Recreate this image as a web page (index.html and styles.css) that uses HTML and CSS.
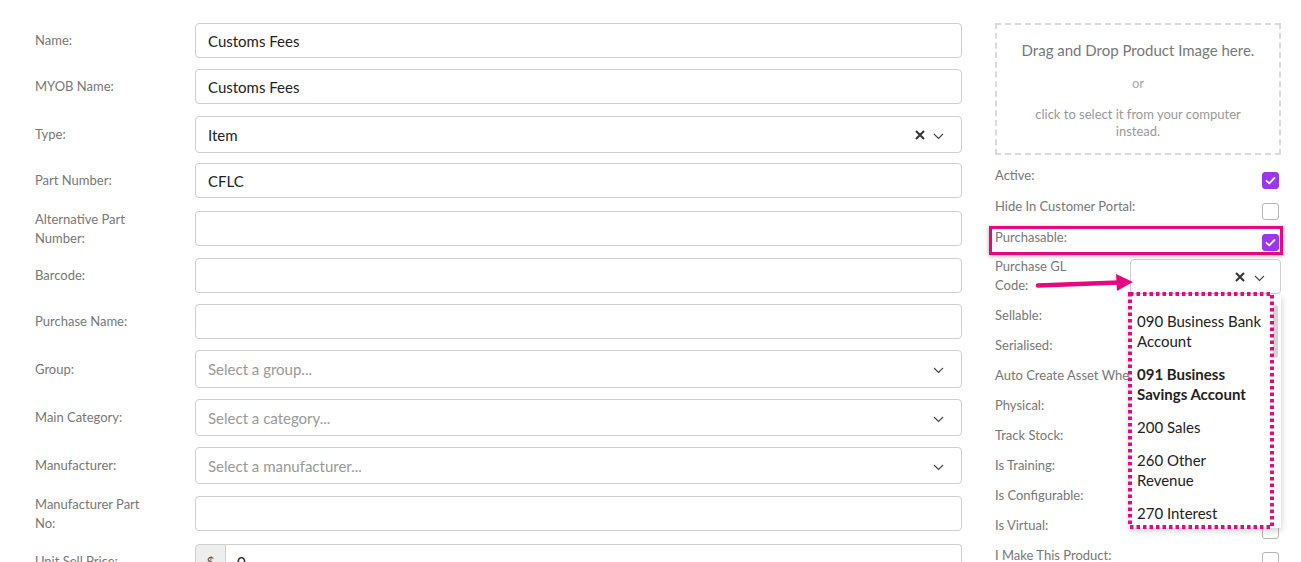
FILE: index.html
```html
<!DOCTYPE html>
<html>
<head>
<meta charset="utf-8">
<link rel="stylesheet" href="styles.css">
</head>
<body>
<div class="page">
  <div class="form">
    <div class="row h35"><div class="lbl">Name:</div><div class="ctl"><span class="val">Customs Fees</span></div></div>
    <div class="row h35"><div class="lbl">MYOB Name:</div><div class="ctl"><span class="val">Customs Fees</span></div></div>
    <div class="row h37"><div class="lbl">Type:</div><div class="ctl sel"><span class="val">Item</span><span class="icons"><svg class="x" width="10" height="10" viewBox="0 0 10 10"><path d="M1 1L9 9M9 1L1 9"/></svg><svg class="chev" width="11" height="7" viewBox="0 0 11 7"><path d="M1 1L5.5 5.5L10 1"/></svg></span></div></div>
    <div class="row h35"><div class="lbl">Part Number:</div><div class="ctl"><span class="val">CFLC</span></div></div>
    <div class="row h35"><div class="lbl two">Alternative Part Number:</div><div class="ctl"></div></div>
    <div class="row h35"><div class="lbl">Barcode:</div><div class="ctl"></div></div>
    <div class="row h35"><div class="lbl">Purchase Name:</div><div class="ctl"></div></div>
    <div class="row h38"><div class="lbl">Group:</div><div class="ctl sel"><span class="ph">Select a group...</span><span class="icons"><svg class="chev" width="11" height="7" viewBox="0 0 11 7"><path d="M1 1L5.5 5.5L10 1"/></svg></span></div></div>
    <div class="row h37"><div class="lbl">Main Category:</div><div class="ctl sel"><span class="ph">Select a category...</span><span class="icons"><svg class="chev" width="11" height="7" viewBox="0 0 11 7"><path d="M1 1L5.5 5.5L10 1"/></svg></span></div></div>
    <div class="row h37"><div class="lbl">Manufacturer:</div><div class="ctl sel"><span class="ph">Select a manufacturer...</span><span class="icons"><svg class="chev" width="11" height="7" viewBox="0 0 11 7"><path d="M1 1L5.5 5.5L10 1"/></svg></span></div></div>
    <div class="row h35"><div class="lbl two">Manufacturer Part No:</div><div class="ctl"></div></div>
    <div class="row h35"><div class="lbl">Unit Sell Price:</div><div class="group"><span class="addon">$</span><div class="ctl grp"><span class="val">0</span></div></div></div>
  </div>

  <div class="side">
    <div class="drop">
      <div class="d1">Drag and Drop Product Image here.</div>
      <div class="d2">or</div>
      <div class="d3">click to select it from your computer instead.</div>
    </div>
    <div class="chk r31"><div class="clbl">Active:</div><span class="cb on"><svg width="17" height="17" viewBox="0 0 17 17"><path d="M4.5 8.8L7.3 11.3L12.5 6"/></svg></span></div>
    <div class="chk r31"><div class="clbl">Hide In Customer Portal:</div><span class="cb"></span></div>
    <div class="chk r29"><div class="clbl">Purchasable:</div><span class="cb on"><svg width="17" height="17" viewBox="0 0 17 17"><path d="M4.5 8.8L7.3 11.3L12.5 6"/></svg></span><span class="hl"></span></div>
    <div class="chk r49 gl">
      <div class="clbl gll">Purchase GL Code:</div>
      <div class="glsel">
        <span class="icons"><svg class="x" width="10" height="10" viewBox="0 0 10 10"><path d="M1 1L9 9M9 1L1 9"/></svg><svg class="chev" width="11" height="7" viewBox="0 0 11 7"><path d="M1 1L5.5 5.5L10 1"/></svg></span>
        <div class="menu">
          <div class="item">090 Business Bank Account</div>
          <div class="item b">091 Business Savings Account</div>
          <div class="item">200 Sales</div>
          <div class="item">260 Other Revenue</div>
          <div class="item">270 Interest</div>
          <span class="thumb"></span>
        </div>
        <svg class="dots" width="146" height="237" viewBox="0 0 146 237"><rect x="2" y="2" width="142" height="233"/></svg>
      </div>
      <svg class="arrow" width="100" height="20" viewBox="0 0 100 20"><path class="shaft" d="M3 12.5L84 9.5"/><path class="head" d="M81 1L98 9L82 18Z"/></svg>
    </div>
    <div class="chk r30"><div class="clbl">Sellable:</div><span class="cb"></span></div>
    <div class="chk r30"><div class="clbl">Serialised:</div><span class="cb"></span></div>
    <div class="chk r30"><div class="clbl">Auto Create Asset When Received:</div><span class="cb"></span></div>
    <div class="chk r30"><div class="clbl">Physical:</div><span class="cb"></span></div>
    <div class="chk r30"><div class="clbl">Track Stock:</div><span class="cb"></span></div>
    <div class="chk r30"><div class="clbl">Is Training:</div><span class="cb"></span></div>
    <div class="chk r30"><div class="clbl">Is Configurable:</div><span class="cb"></span></div>
    <div class="chk r30"><div class="clbl">Is Virtual:</div><span class="cb"></span></div>
    <div class="chk r30"><div class="clbl">I Make This Product:</div><span class="cb"></span></div>
  </div>
</div>
</body>
</html>
```

FILE: styles.css
```css
html, body {
  margin: 0;
  padding: 0;
  background: #fff;
  overflow: hidden;
}
body {
  font-family: Lato, "Open Sans", sans-serif;
  color: #222;
  width: 1301px;
  height: 562px;
}
.page {
  display: flex;
  padding: 23px 0 0 35px;
}
.form {
  display: grid;
  grid-template-columns: 927px;
  grid-template-rows: 46px 47px 47px 48px 47px 46px 46px 49px 48px 49px 48px auto;
  width: 927px;
}
.row {
  display: flex;
  align-items: center;
}
.row.h35 { height: 35px; }
.row.h37 { height: 37px; }
.row.h38 { height: 38px; }
.lbl {
  width: 160px;
  flex: none;
  font-size: 13px;
  line-height: 19px;
  color: #777;
}
.lbl.two { width: 120px; margin-right: 40px; }
.ctl {
  box-sizing: border-box;
  width: 767px;
  height: 100%;
  border: 1px solid #cfcfcf;
  border-radius: 4px;
  display: flex;
  align-items: center;
  padding: 0 12px;
  font-size: 15px;
}
.val { color: #222; }
.ph { color: #999; }
.sel { justify-content: space-between; padding-right: 17px; }
.icons {
  display: flex;
  align-items: center;
  gap: 8px;
}
.x path {
  stroke: #333;
  stroke-width: 2;
  fill: none;
}
.chev path {
  stroke: #444;
  stroke-width: 1.1;
  fill: none;
}
.chev { margin-top: 3px; }
.group {
  display: flex;
  width: 767px;
  height: 100%;
}
.addon {
  box-sizing: border-box;
  width: 31px;
  height: 100%;
  background: #eee;
  border: 1px solid #cfcfcf;
  border-radius: 4px 0 0 4px;
  font-size: 14px;
  color: #555;
  display: flex;
  justify-content: center;
  align-items: center;
}
.ctl.grp {
  width: 736px;
  border-left: none;
  border-radius: 0 4px 4px 0;
  padding-left: 11px;
}

/* side */
.side {
  width: 286px;
  margin-left: 33px;
  display: flex;
  flex-direction: column;
}
.drop {
  box-sizing: border-box;
  height: 132px;
  border: 2px dashed #dadada;
  text-align: center;
  padding: 15px 20px 0;
  margin-bottom: 11px;
}
.d1 {
  font-size: 15px;
  line-height: 20px;
  color: #777;
}
.d2 {
  font-size: 13px;
  line-height: 18px;
  color: #aaa;
  margin-top: 14px;
}
.d3 {
  font-size: 13px;
  line-height: 17px;
  color: #999;
  margin-top: 14px;
  padding: 0 10px;
}
.chk {
  position: relative;
  display: flex;
  justify-content: space-between;
  align-items: flex-start;
}
.r31 { height: 31px; }
.r29 { height: 29px; }
.r30 { height: 30px; }
.r49 { height: 49px; }
.clbl {
  font-size: 13px;
  line-height: 19px;
  color: #777;
  white-space: nowrap;
}
.cb {
  box-sizing: border-box;
  width: 17px;
  height: 17px;
  margin-top: 6px;
  margin-right: 2px;
  border: 1px solid #b5b5b5;
  border-radius: 3px;
  background: #fff;
  flex: none;
}
.cb.on {
  background: #9b36ec;
  border-color: #9b36ec;
  position: relative;
}
.cb.on svg {
  position: absolute;
  left: -1px;
  top: -1px;
}
.cb.on path {
  stroke: #fff;
  stroke-width: 1.8;
  fill: none;
  stroke-linecap: round;
  stroke-linejoin: round;
}
.hl {
  position: absolute;
  left: -6px;
  right: -2px;
  top: -2px;
  height: 29px;
  box-sizing: border-box;
  border: 3px solid #e5097f;
  box-shadow: 0 1px 4px rgba(0, 0, 0, 0.35);
}
.gl { justify-content: flex-start; }
.gll {
  white-space: normal;
  width: 90px;
  margin-right: 45px;
}
.glsel {
  position: relative;
  box-sizing: border-box;
  width: 151px;
  height: 35px;
  margin-top: 2px;
  border: 1px solid #cfcfcf;
  border-radius: 4px;
  display: flex;
  justify-content: flex-end;
  align-items: center;
  padding-right: 15px;
}
.glsel .icons { gap: 9px; }
.menu {
  position: absolute;
  left: -1px;
  top: 35px;
  width: 151px;
  height: 233px;
  box-sizing: border-box;
  background: #fff;
  box-shadow: 0 2px 7px rgba(0, 0, 0, 0.22);
  padding: 9px 17px 0 7px;
  overflow: hidden;
  z-index: 2;
}
.item {
  font-size: 15px;
  line-height: 20px;
  color: #222;
  padding: 7px 0 6px;
}
.item.b { font-weight: 700; }
.thumb {
  position: absolute;
  right: 3px;
  top: 10px;
  width: 5px;
  height: 53px;
  border-radius: 3px;
  background: #d4d4d4;
}
.dots {
  position: absolute;
  left: -3px;
  top: 32px;
  z-index: 3;
}
.dots rect {
  fill: none;
  stroke: #e5097f;
  stroke-width: 4;
  stroke-dasharray: 3.5 3;
}
.arrow {
  position: absolute;
  left: 40px;
  top: 16px;
  z-index: 4;
}
.arrow .shaft {
  stroke: #e5097f;
  stroke-width: 4.5;
  stroke-linecap: round;
  fill: none;
}
.arrow .head { fill: #e5097f; }
```
